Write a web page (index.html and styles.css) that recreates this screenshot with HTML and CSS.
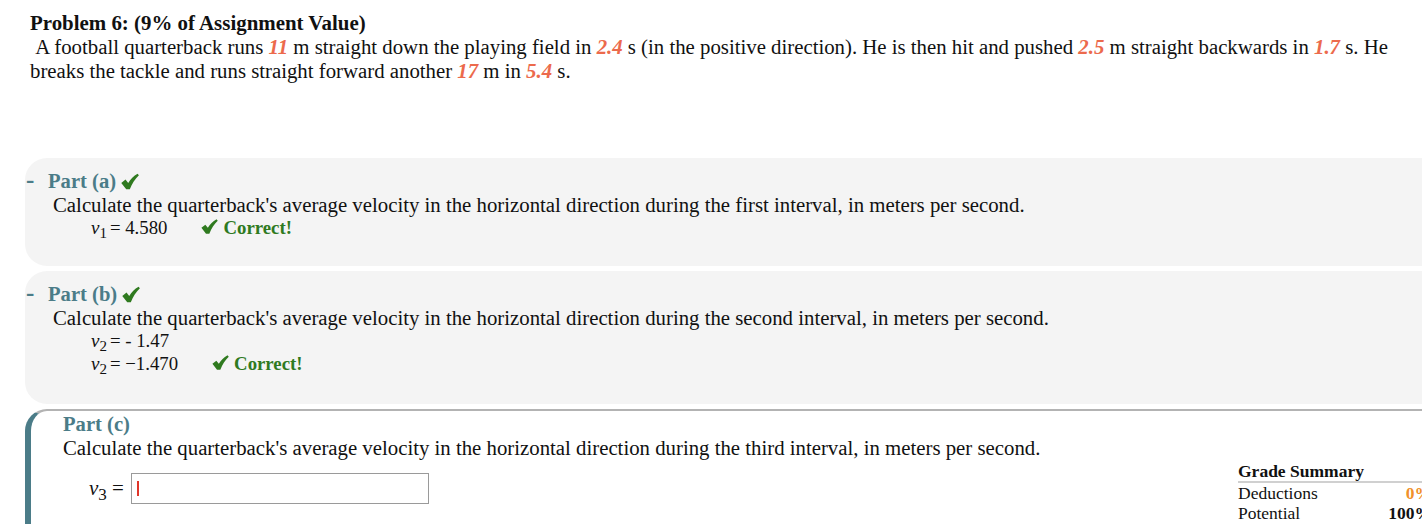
FILE: index.html
```html
<!DOCTYPE html>
<html>
<head>
<meta charset="utf-8">
<link rel="stylesheet" href="styles.css">
</head>
<body>
<div class="page">
  <div class="problem">
    <div class="title">Problem 6: (9% of Assignment Value)</div>
    <div class="stmt">&nbsp;A football quarterback runs <span class="num">11</span> m straight down the playing field in <span class="num">2.4</span> s (in the positive direction). He is then hit and pushed <span class="num">2.5</span> m straight backwards in <span class="num">1.7</span> s. He breaks the tackle and runs straight forward another <span class="num">17</span> m in <span class="num">5.4</span> s.</div>
  </div>

  <div class="part done part-a">
    <div class="phead"><span class="dash">-</span><span class="plabel">Part (a)</span><svg class="pcheck" viewBox="0 0 20 18"><path d="M0.3 10.6 L5 6.8 L8 10.6 C10.6 6.2 14 2.8 18.4 0.3 L19.9 2 C15.6 6 12.2 11 9.8 17.7 L5.8 17.7 Z"/></svg></div>
    <div class="pq">Calculate the quarterback's average velocity in the horizontal direction during the first interval, in meters per second.</div>
    <div class="ans"><span class="var"><i>v</i><sub>1</sub></span><span class="val">= 4.580</span><span class="ok"><svg class="okmark" viewBox="0 0 20 18"><path d="M0.3 10.6 L5 6.8 L8 10.6 C10.6 6.2 14 2.8 18.4 0.3 L19.9 2 C15.6 6 12.2 11 9.8 17.7 L5.8 17.7 Z"/></svg>Correct!</span></div>
  </div>

  <div class="part done part-b">
    <div class="phead"><span class="dash">-</span><span class="plabel">Part (b)</span><svg class="pcheck" viewBox="0 0 20 18"><path d="M0.3 10.6 L5 6.8 L8 10.6 C10.6 6.2 14 2.8 18.4 0.3 L19.9 2 C15.6 6 12.2 11 9.8 17.7 L5.8 17.7 Z"/></svg></div>
    <div class="pq">Calculate the quarterback's average velocity in the horizontal direction during the second interval, in meters per second.</div>
    <div class="ans"><span class="var"><i>v</i><sub>2</sub></span><span class="val">= - 1.47</span></div>
    <div class="ans"><span class="var"><i>v</i><sub>2</sub></span><span class="val">= &minus;1.470</span><span class="ok"><svg class="okmark" viewBox="0 0 20 18"><path d="M0.3 10.6 L5 6.8 L8 10.6 C10.6 6.2 14 2.8 18.4 0.3 L19.9 2 C15.6 6 12.2 11 9.8 17.7 L5.8 17.7 Z"/></svg>Correct!</span></div>
  </div>

  <div class="part active">
    <div class="phead"><span class="plabel">Part (c)</span></div>
    <div class="pq">Calculate the quarterback's average velocity in the horizontal direction during the third interval, in meters per second.</div>
    <div class="cbody">
      <div class="inrow"><span class="var3"><i>v</i><sub>3</sub> =</span><span class="inbox"><span class="caret"></span></span></div>
      <table class="grade">
        <tr><th colspan="2">Grade Summary</th></tr>
        <tr><td>Deductions</td><td class="ded">0%</td></tr>
        <tr><td>Potential</td><td class="pot">100%</td></tr>
      </table>
    </div>
  </div>
</div>
</body>
</html>
```

FILE: styles.css
```css
html, body {
  margin: 0;
  padding: 0;
  background: #fff;
  overflow: hidden;
}
body {
  font-family: "Liberation Serif", "Times New Roman", serif;
  color: #111;
}
.page {
  width: 1460px;
  padding-left: 25px;
}
.problem {
  padding-left: 5px;
  padding-top: 11px;
  width: 1370px;
}
.title {
  font-weight: bold;
  font-size: 20.9px;
  line-height: 24px;
}
.stmt {
  font-size: 20.8px;
  line-height: 24px;
}
.num {
  color: #ec6a4c;
  font-weight: bold;
  font-style: italic;
}
.part {
  margin-bottom: 5px;
}
.done {
  background: #f4f4f4;
  border-radius: 22px 0 0 22px;
  padding: 10px 0 0 1px;
}
.part-a { margin-top: 75px; height: 98px; }
.part-b { height: 123px; }
.phead {
  display: flex;
  align-items: baseline;
  font-size: 20.6px;
  line-height: 24px;
  font-weight: bold;
}
.dash {
  color: #4b7c88;
  width: 22px;
  font-size: 25px;
}
.plabel {
  color: #4b7c88;
}
.pcheck {
  fill: #2f7a1f;
  width: 18px;
  height: 17px;
  margin-left: 5px;
  align-self: center;
  margin-top: 1px;
}
.pq {
  font-size: 20.8px;
  line-height: 24px;
  padding-left: 27px;
}
.ans {
  font-size: 18.8px;
  line-height: 23px;
  padding-left: 65px;
  display: flex;
  align-items: baseline;
  margin-top: -1px;
  margin-bottom: 1px;
}
.var i { font-size: 19px; }
.var sub, .var3 sub {
  font-size: 15px;
  vertical-align: -4px;
  line-height: 0;
}
.val { margin-left: 3px; margin-right: 34px; }
.ok {
  color: #2f7a1f;
  font-weight: bold;
  display: inline-flex;
  align-items: baseline;
}
.okmark {
  fill: #2f7a1f;
  width: 17px;
  height: 15px;
  margin-right: 5px;
  vertical-align: -1px;
}
.active {
  border-top: 2px solid #b3b3b3;
  border-left: 6px solid #4b7c88;
  border-top-left-radius: 22px;
  margin-top: 2px;
  padding: 1px 0 0 32px;
  height: 122px;
}
.active .pq { padding-left: 0; }
.cbody {
  display: grid;
  grid-template-columns: 1fr 194px;
  align-items: start;
  padding-right: 53px;
  margin-top: 12px;
}
.inrow {
  display: flex;
  align-items: center;
  padding-left: 26px;
  height: 32px;
}
.var3 {
  font-size: 21px;
  margin-right: 7px;
}
.var3 sub { font-size: 17px; vertical-align: -5px; }
.inbox {
  width: 291px;
  height: 29px;
  border: 1px solid #9a9a9a;
  display: flex;
  align-items: center;
  padding-left: 5px;
}
.caret {
  width: 2px;
  height: 15px;
  background: #e0362a;
}
.grade {
  border-collapse: collapse;
  font-size: 17.5px;
  width: 194px;
  margin-top: -11px;
}
.grade th {
  text-align: left;
  font-weight: bold;
  border-bottom: 2px solid #d0d0d0;
  padding: 0;
  line-height: 20px;
}
.grade td {
  padding: 0;
  line-height: 20px;
}
.ded {
  color: #f0902a;
  font-weight: bold;
  text-align: right;
}
.pot {
  font-weight: bold;
  text-align: right;
}
```
